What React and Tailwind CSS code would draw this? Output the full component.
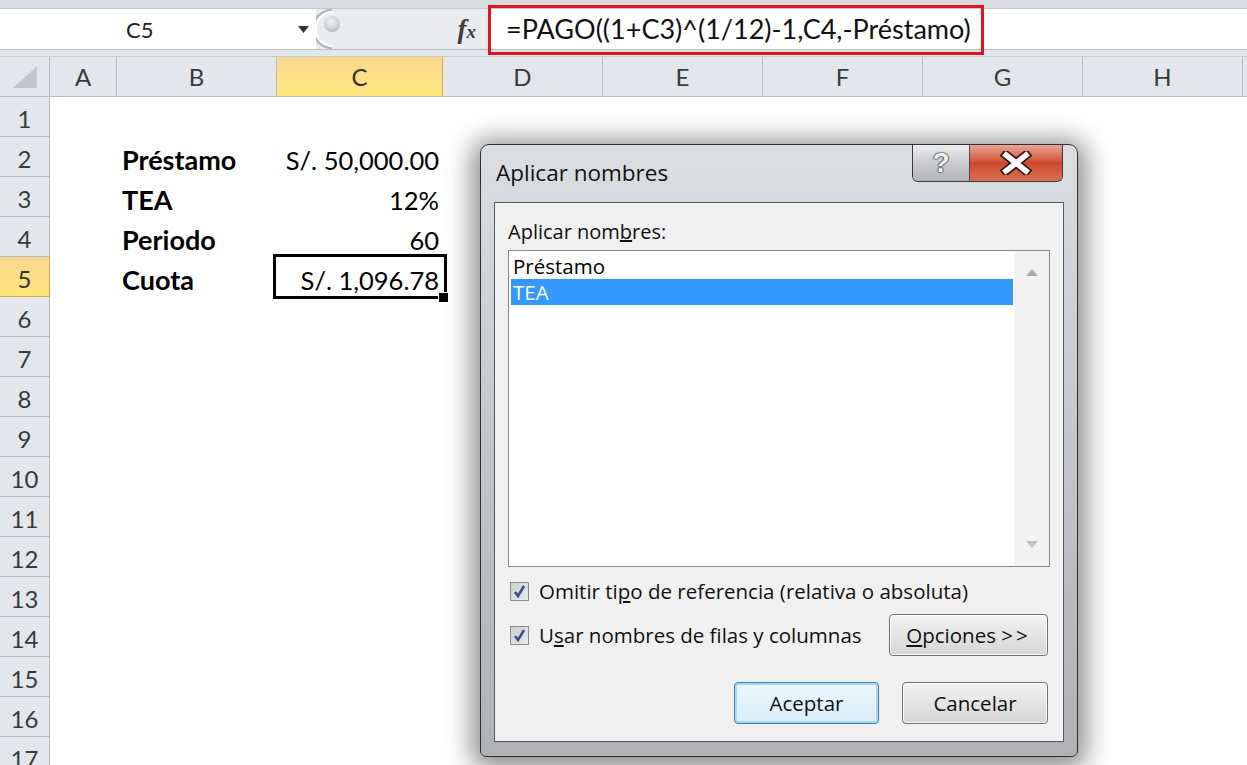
import React from 'react';

const COLS = [
  { id: 'A', w: 'w-[67px]' },
  { id: 'B', w: 'w-[160px]' },
  { id: 'C', w: 'w-[166px]' },
  { id: 'D', w: 'w-[160px]' },
  { id: 'E', w: 'w-[160px]' },
  { id: 'F', w: 'w-[160px]' },
  { id: 'G', w: 'w-[160px]' },
  { id: 'H', w: 'w-[160px]' },
];

const DATA = {
  2: { B: 'Préstamo', C: 'S/. 50,000.00' },
  3: { B: 'TEA', C: '12%' },
  4: { B: 'Periodo', C: '60' },
  5: { B: 'Cuota', C: 'S/. 1,096.78' },
};

const cellFont = { fontFamily: 'Lato, "Liberation Sans", sans-serif' };
const uiFont = { fontFamily: '"Open Sans", "Noto Sans", sans-serif' };

function FormulaBar() {
  return (
    <div className="relative">
      <div className="h-[9px] bg-[#d9dde2] border-b border-[#c3c7cc]" />
      <div className="flex h-[41px] bg-[#e9ebee] border-b border-[#b9bdc2]">
        <div className="w-[290px] bg-white flex items-center pl-[126px] text-[22px] text-[#222]" style={cellFont}>
          C5
        </div>
        <div className="w-[26px] bg-white flex items-center justify-center">
          <svg width="11" height="7" viewBox="0 0 11 7">
            <path d="M0 0 L11 0 L5.5 7 Z" fill="#333" />
          </svg>
        </div>
        <div className="w-[40px] flex items-center">
          <svg width="38" height="40" viewBox="0 0 38 40">
            <defs>
              <radialGradient id="nub" cx="0.45" cy="0.35" r="0.7">
                <stop offset="0" stopColor="#f4f5f6" />
                <stop offset="1" stopColor="#b7babe" />
              </radialGradient>
            </defs>
            <path d="M16 1 A 19 19 0 0 0 16 39" fill="none" stroke="#aeb1b5" strokeWidth="2" />
            <path d="M17 3 A 17 17 0 0 0 17 37" fill="none" stroke="#fff" strokeWidth="2" />
            <circle cx="16" cy="15" r="8" fill="url(#nub)" />
          </svg>
        </div>
        <div className="w-[132px] flex items-center justify-end pr-[12px]">
          <span className="text-[27px] italic font-bold text-[#3d3d3d] leading-none" style={{ fontFamily: '"Liberation Serif", serif' }}>
            f<span className="text-[19px]">x</span>
          </span>
        </div>
        <div className="flex-1 bg-white flex items-center pl-[18px] text-[27px] text-[#111] whitespace-nowrap" style={cellFont}>
          =PAGO((1+C3)^(1/12)-1,C4,-Préstamo)
        </div>
      </div>
      <div className="h-[7px] bg-[#e3e6ea] border-b border-[#c9cdd2]" />
      <div className="absolute left-[488px] top-[5px] w-[496px] h-[50px] border-[3px] border-[#e0141e]" />
    </div>
  );
}

function ColumnHeaders() {
  return (
    <div className="flex h-[40px] bg-[#e3e6ea] border-b border-[#b6bac0]">
      <div className="w-[50px] shrink-0 border-r border-[#b6bac0] flex items-center justify-center">
        <svg width="24" height="22" viewBox="0 0 24 22">
          <path d="M24 0 L24 22 L0 22 Z" fill="#c3c6ca" />
        </svg>
      </div>
      {COLS.map((c) => (
        <div
          key={c.id}
          className={`${c.w} shrink-0 flex items-center justify-center text-[24px] border-r ${
            c.id === 'C'
              ? 'bg-gradient-to-b from-[#f9d88e] to-[#fde67e] border-[#e2a547] text-[#333]'
              : 'border-[#b6bac0] text-[#3a3a3a]'
          }`}
          style={cellFont}
        >
          {c.id}
        </div>
      ))}
      <div className="flex-1" />
    </div>
  );
}

function Row({ n }) {
  const row = DATA[n] || {};
  const active = n === 5;
  return (
    <div className="flex h-[40px]">
      <div
        className={`w-[50px] shrink-0 flex items-center justify-center pt-[4px] text-[24px] border-r border-b ${
          active
            ? 'bg-gradient-to-b from-[#f9d88e] to-[#fde47c] border-[#e2a547] text-[#333]'
            : 'bg-[#e3e6ea] border-[#b6bac0] text-[#3a3a3a]'
        }`}
        style={cellFont}
      >
        {n}
      </div>
      {COLS.map((c) => (
        <div key={c.id} className={`${c.w} shrink-0 relative flex items-end pb-[2px] leading-[30px] text-black whitespace-nowrap`} style={cellFont}>
          {c.id === 'B' && row.B && <span className="pl-[5px] font-bold text-[27px]">{row.B}</span>}
          {c.id === 'C' && row.C && <span className="ml-auto pr-[4px] text-[25.5px]">{row.C}</span>}
          {c.id === 'C' && active && (
            <>
              <div className="absolute -left-[4px] -top-[3px] -right-[4px] -bottom-[2px] border-[3px] border-black" />
              <div className="absolute -right-[6px] -bottom-[6px] w-[11px] h-[11px] bg-black border border-white" />
            </>
          )}
        </div>
      ))}
    </div>
  );
}

function Check({ children }) {
  return (
    <div className="flex items-center">
      <div className="ml-[2px] w-[19px] h-[19px] border border-[#8a8a8a] bg-gradient-to-br from-[#cfcfcf] to-[#e9e9e9] flex items-center justify-center">
        <svg width="13" height="13" viewBox="0 0 13 13">
          <path d="M2 7 L5 11 L11 1" fill="none" stroke="#3a4f90" strokeWidth="2.6" />
        </svg>
      </div>
      <span className="ml-[10px] text-[20.5px] text-[#111]">{children}</span>
    </div>
  );
}

function Btn({ children, primary, w }) {
  return (
    <div
      className={`${w} h-[42px] rounded-[4px] border flex items-center justify-center text-[20.5px] text-[#111] ${
        primary
          ? 'border-[#3c7fb1] shadow-[inset_0_0_0_2px_#a7d8f4] bg-gradient-to-b from-[#eaf6fd] to-[#d9eef9]'
          : 'border-[#707070] shadow-[inset_0_0_0_1px_#fafafa] bg-gradient-to-b from-[#f2f2f2] to-[#d6d6d6]'
      }`}
    >
      {children}
    </div>
  );
}

function Dialog() {
  return (
    <div
      className="absolute left-[480px] top-[144px] w-[598px] h-[613px] rounded-t-[9px] rounded-b-[6px] border border-[#2f2f2f] bg-gradient-to-b from-[#dcdfe2] via-[#c2c5c9] to-[#b0b2b5] shadow-[0_4px_26px_8px_rgba(0,0,0,0.45)] flex flex-col px-[13px] pb-[14px]"
      style={uiFont}
    >
      <div className="h-[57px] shrink-0 flex items-start">
        <div className="pt-[11px] pl-[2px] text-[22.5px] text-[#111]">Aplicar nombres</div>
        <div className="ml-auto mr-[1px] flex h-[37px] rounded-b-[6px] border border-t-0 border-[#3a3a3a] overflow-hidden">
          <div className="w-[57px] flex items-center justify-center bg-gradient-to-b from-[#eceef0] via-[#c9cbce] to-[#b4b6b9] border-r border-[#4a4a4a]">
            <span className="text-[28px] font-bold leading-none text-[#f2f2f2] [text-shadow:0_0_2px_#1e1e1e,0_0_1px_#1e1e1e,0_0_1px_#1e1e1e]" style={{ fontFamily: '"Liberation Sans", sans-serif' }}>?</span>
          </div>
          <div className="w-[92px] flex items-center justify-center bg-gradient-to-b from-[#e9a595] via-[#cd4a2f] to-[#d8704f]">
            <svg width="34" height="24" viewBox="0 0 34 24">
              <path d="M7 4 L27 20 M27 4 L7 20" stroke="#3a1a14" strokeWidth="9" strokeLinecap="square" />
              <path d="M7 4 L27 20 M27 4 L7 20" stroke="#ffffff" strokeWidth="5.5" strokeLinecap="square" />
            </svg>
          </div>
        </div>
      </div>
      <div className="flex-1 border border-[#595959] bg-[#f0f0f0] flex flex-col pl-[13px] pr-[13px]">
        <div className="mt-[17px] mb-[6px] h-[24px] flex items-center text-[20px] text-[#111]">
          Aplicar nom<span className="underline">b</span>res:
        </div>
        <div className="h-[317px] border border-[#828790] bg-white flex">
          <div className="flex-1 pt-[3px] pl-[2px] text-[20.5px]">
            <div className="h-[25px] flex items-center pl-[2px] text-black">Préstamo</div>
            <div className="h-[26px] flex items-center pl-[2px] bg-[#3399ff] text-white">TEA</div>
          </div>
          <div className="w-[36px] bg-[#f2f2f2] border-l border-white flex flex-col items-center justify-between py-[18px]">
            <svg width="12" height="7" viewBox="0 0 12 7">
              <path d="M0 7 L6 0 L12 7 Z" fill="#a9a9a9" />
            </svg>
            <svg width="12" height="7" viewBox="0 0 12 7">
              <path d="M0 0 L6 7 L12 0 Z" fill="#c0c0c0" />
            </svg>
          </div>
        </div>
        <div className="mt-[12px] h-[24px] flex items-center">
          <Check>
            Omitir ti<span className="underline">p</span>o de referencia (relativa o absoluta)
          </Check>
        </div>
        <div className="mt-[11px] h-[42px] flex items-center pr-[2px]">
          <Check>
            U<span className="underline">s</span>ar nombres de filas y columnas
          </Check>
          <div className="ml-auto">
            <Btn w="w-[159px]">
              <span>
                <span className="underline">O</span>pciones <span className="tracking-[3px]">&gt;&gt;</span>
              </span>
            </Btn>
          </div>
        </div>
        <div className="mt-[26px] flex justify-end gap-[23px] pr-[2px]">
          <Btn primary w="w-[145px]">Aceptar</Btn>
          <Btn w="w-[146px]">Cancelar</Btn>
        </div>
      </div>
    </div>
  );
}

export default function App() {
  const rows = Array.from({ length: 17 }, (_, i) => i + 1);
  return (
    <div className="w-[1247px] h-[765px] overflow-hidden bg-white relative">
      <FormulaBar />
      <ColumnHeaders />
      {rows.map((n) => (
        <Row key={n} n={n} />
      ))}
      <Dialog />
    </div>
  );
}
